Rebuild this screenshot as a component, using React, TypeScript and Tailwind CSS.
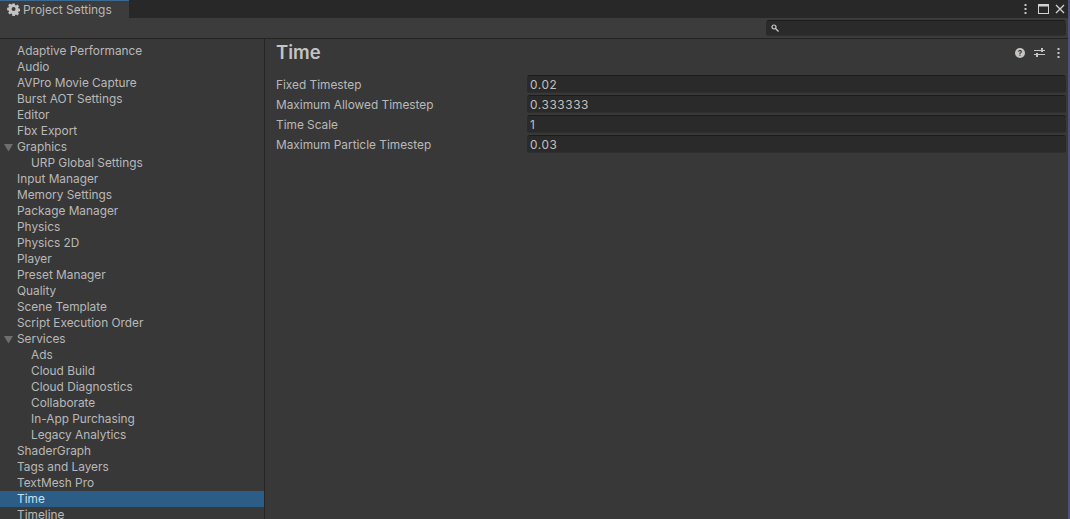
import React from "react";

const items: [string, number, boolean?][] = [
  ["Adaptive Performance", 0],
  ["Audio", 0],
  ["AVPro Movie Capture", 0],
  ["Burst AOT Settings", 0],
  ["Editor", 0],
  ["Fbx Export", 0],
  ["Graphics", 0, true],
  ["URP Global Settings", 1],
  ["Input Manager", 0],
  ["Memory Settings", 0],
  ["Package Manager", 0],
  ["Physics", 0],
  ["Physics 2D", 0],
  ["Player", 0],
  ["Preset Manager", 0],
  ["Quality", 0],
  ["Scene Template", 0],
  ["Script Execution Order", 0],
  ["Services", 0, true],
  ["Ads", 1],
  ["Cloud Build", 1],
  ["Cloud Diagnostics", 1],
  ["Collaborate", 1],
  ["In-App Purchasing", 1],
  ["Legacy Analytics", 1],
  ["ShaderGraph", 0],
  ["Tags and Layers", 0],
  ["TextMesh Pro", 0],
  ["Time", 0],
  ["Timeline", 0],
];

const fields = [
  ["Fixed Timestep", "0.02"],
  ["Maximum Allowed Timestep", "0.333333"],
  ["Time Scale", "1"],
  ["Maximum Particle Timestep", "0.03"],
];

function Dots({ color = "#c4c4c4" }: { color?: string }) {
  return (
    <svg width="3" height="10" viewBox="0 0 3 10" fill={color}>
      <rect x="0.5" y="0" width="2" height="2" />
      <rect x="0.5" y="4" width="2" height="2" />
      <rect x="0.5" y="8" width="2" height="2" />
    </svg>
  );
}

function Gear() {
  return (
    <svg width="13" height="13" viewBox="0 0 24 24" fill="#c2c2c2">
      <path
        fillRule="evenodd"
        d="M9.6 1h4.8l.6 3.2 1.9.8 2.7-1.9 3.4 3.4-1.9 2.7.8 1.9 3.1.5v4.8l-3.1.6-.8 1.9 1.9 2.7-3.4 3.4-2.700-1.900-1.900.8-.6 3.100H9.600L9 22l-1.900-.8-2.700 1.900L1 19.700l1.900-2.700L2.100 15 -1 14.500V9.700l3.100-.6.8-1.900L1 4.500 4.400 1.100l2.700 1.900L9 2.200zM12 8a4 4 0 1 0 0 8 4 4 0 0 0 0-8z"
        transform="translate(1.100 0) scale(0.92)"
      />
    </svg>
  );
}

function Row({ label, indent, open }: { label: string; indent: number; open?: boolean }) {
  const selected = label === "Time";
  return (
    <div
      className={`relative h-4 shrink-0 text-[11.85px] leading-4 whitespace-nowrap ${
        indent ? "pl-[31px]" : "pl-[17px]"
      } ${selected ? "bg-[#2c5d87] text-[#c4e0f5]" : "text-[#b8b8b8]"}`}
    >
      {open && (
        <svg className="absolute left-[4px] top-[4px]" width="9" height="9" viewBox="0 0 9 9" fill="#6e6e6e">
          <path d="M0 1h9L4.500 8.500z" />
        </svg>
      )}
      {label}
    </div>
  );
}

export default function App() {
  return (
    <div
      className="flex h-[519px] w-[1070px] flex-col overflow-hidden border-r-2 border-[#50507a] bg-[#383838] text-[#b8b8b8]"
      style={{ fontFamily: "Inter, 'Noto Sans', sans-serif" }}
    >
      <div className="flex h-[18px] shrink-0 bg-[#282828]">
        <div className="flex h-[18px] w-[129px] items-center gap-[3px] border-t border-[#3a6a92] bg-[#3c3c3c] pl-[7px] text-[11.95px] leading-[16px] text-[#b8b8b8]">
          <Gear />
          <span>Project Settings</span>
        </div>
        <div className="ml-auto flex items-center pr-[3px]">
          <Dots />
          <svg className="ml-[11px]" width="11" height="10" viewBox="0 0 11 10" fill="none" stroke="#d2d2d2">
            <rect x="0.500" y="0.500" width="10" height="9" />
            <rect x="0.500" y="0.500" width="10" height="1.500" fill="#d2d2d2" />
          </svg>
          <svg className="ml-[6px]" width="10" height="10" viewBox="0 0 10 10" fill="none" stroke="#d2d2d2" strokeWidth="1.300">
            <path d="M1 1l8 8M9 1l-8 8" />
          </svg>
        </div>
      </div>

      <div className="flex h-[21px] shrink-0 items-center justify-end border-b border-[#232323] bg-[#3c3c3c] pr-[2px]">
        <div className="flex h-[16px] w-[300px] items-center rounded-[3px] border border-t-[#1b1b1b] border-x-[#2a2a2a] border-b-[#2f2f2f] bg-[#2a2a2a] pl-[4px]">
          <svg width="8" height="8" viewBox="0 0 8 8" fill="none" stroke="#cfcfcf" strokeWidth="1.200">
            <circle cx="3" cy="3" r="2" />
            <path d="M4.500 4.500L7.500 7.500" />
          </svg>
        </div>
      </div>

      <div className="flex min-h-0 flex-1">
        <div className="flex w-[265px] shrink-0 flex-col overflow-hidden border-r border-[#252525] pt-[4px]">
          {items.map(([label, indent, open]) => (
            <Row key={label} label={label} indent={indent} open={open} />
          ))}
        </div>

        <div className="min-w-0 flex-1 pl-[11px] pr-[2px]">
          <div className="flex h-[27px] items-center justify-between pr-[6px]">
            <span className="text-[18.5px] font-semibold text-[#c4c4c4]">Time</span>
            <div className="flex items-center">
              <svg width="10" height="10" viewBox="0 0 10 10">
                <circle cx="5" cy="5" r="5" fill="#c4c4c4" />
                <text x="5" y="8" textAnchor="middle" fontSize="8" fontWeight="700" fill="#383838">?</text>
              </svg>
              <svg className="ml-[9px]" width="11" height="11" viewBox="0 0 11 11" fill="#c4c4c4">
                <rect x="0" y="3" width="11" height="1" />
                <rect x="0" y="7" width="11" height="1" />
                <rect x="7" y="1" width="2" height="4" />
                <rect x="2" y="6" width="2" height="4" />
              </svg>
              <span className="ml-[12px] flex"><Dots /></span>
            </div>
          </div>
          <div className="mt-[9px] flex flex-col">
            {fields.map(([label, value]) => (
              <div key={label} className="flex h-5 items-start">
                <div className="w-[251px] shrink-0 text-[11.85px] leading-5 text-[#b8b8b8]">{label}</div>
                <div className="flex h-[18px] flex-1 items-center rounded-[3px] border border-t-[#1c1c1c] border-x-[#2a2a2a] border-b-[#2f2f2f] bg-[#2a2a2a] pl-[2px] pt-[2px] text-[11.85px] leading-[14px] tracking-[0.6px] text-[#c0c0c0]">
                  {value}
                </div>
              </div>
            ))}
          </div>
        </div>
      </div>
    </div>
  );
}
